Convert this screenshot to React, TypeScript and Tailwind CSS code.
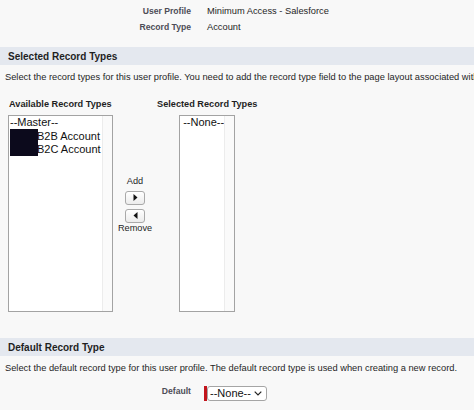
import React from "react";

const font = "font-['Liberation_Sans',Arial,sans-serif]";

function SectionHeader({ title }: { title: string }) {
    return (
        <div className="flex h-[18px] items-center bg-[#e4e8ef] pl-[8px]">
            <h2 className="text-[10px] font-bold text-[#1f1f1f]">{title}</h2>
        </div>
    );
}

function MoveButton({ dir }: { dir: "right" | "left" }) {
    return (
        <button
            type="button"
            className="flex h-[14px] w-[20px] items-center justify-center rounded-[3px] border border-[#a9a9a9] bg-gradient-to-b from-white to-[#ececec]"
            aria-label={dir === "right" ? "Add" : "Remove"}
        >
            <svg width="5" height="7" viewBox="0 0 5 7">
                {dir === "right" ? (
                    <polygon points="0.5,0 4.5,3.5 0.5,7" fill="#111" />
                ) : (
                    <polygon points="4.5,0 0.5,3.5 4.5,7" fill="#111" />
                )}
            </svg>
        </button>
    );
}

function ListBox({ children, width, padLeft }: { children: React.ReactNode; width: string; padLeft: string }) {
    return (
        <div className={`relative flex h-[197px] ${width} border border-[#a3a3a3] bg-white`}>
            <div className={`flex-1 ${padLeft} text-[11px] leading-[13.5px] text-[#111]`}>{children}</div>
            <div className="w-[10px] border-l border-[#ececec] bg-[#fafafa]" />
        </div>
    );
}

export default function App() {
    return (
        <div className={`${font} min-h-[410px] w-[474px] overflow-hidden bg-[#f8f8f8] text-[#1f1f1f]`}>
            {/* profile / record type summary */}
            <div className="grid grid-cols-[191px_1fr] gap-x-[16px] pt-[3px] text-[9.3px] leading-[16px]">
                <span className="text-right text-[8.6px] font-bold text-[#4d4d57]">User Profile</span>
                <span>Minimum Access - Salesforce</span>
                <span className="text-right text-[8.6px] font-bold text-[#4d4d57]">Record Type</span>
                <span>Account</span>
            </div>

            <div className="mt-[12px]">
                <SectionHeader title="Selected Record Types" />
                <p className="mt-[6px] whitespace-nowrap pl-[5px] text-[9.3px] leading-[12px]">
                    Select the record types for this user profile. You need to add the record type field to the page layout associated with the record type.
                </p>

                <div className="mt-[15px] flex items-center pl-[8px]">
                    <div className="flex flex-col">
                        <span className="pl-[1px] text-[9.2px] font-bold leading-[12px]">Available Record Types</span>
                        <div className="mt-[5px]">
                            <ListBox width="w-[105px]" padLeft="pl-[1px]">
                                <div>--Master--</div>
                                <div className="pl-[27px]">B2B Account</div>
                                <div className="pl-[27px]">B2C Account</div>
                                <div className="absolute left-[1px] top-[13px] h-[27px] w-[28px] bg-[#0c0a1c]" />
                            </ListBox>
                        </div>
                    </div>

                    <div className="flex w-[44px] flex-col items-center text-[9.2px] leading-[11px] text-[#1f1f1f]">
                        <span>Add</span>
                        <div className="mt-[3.5px] flex flex-col gap-[4px]">
                            <MoveButton dir="right" />
                            <MoveButton dir="left" />
                        </div>
                        <span>Remove</span>
                    </div>

                    <div className="flex flex-col items-center">
                        <span className="text-[9.2px] font-bold leading-[12px]">Selected Record Types</span>
                        <div className="mt-[5px]">
                            <ListBox width="w-[56px]" padLeft="pl-[3px]">
                                <div>--None--</div>
                            </ListBox>
                        </div>
                    </div>
                </div>
            </div>

            <div className="mt-[26px]">
                <SectionHeader title="Default Record Type" />
                <p className="mt-[6px] whitespace-nowrap pl-[5px] text-[9.3px] leading-[12px]">
                    Select the default record type for this user profile. The default record type is used when creating a new record.
                </p>
                <div className="mt-[12px] grid grid-cols-[191px_1fr] gap-x-[13px]">
                    <span className="text-right text-[8.6px] font-bold leading-[10px] text-[#4d4d57]">Default</span>
                    <div className="flex items-stretch">
                        <div className="w-[3px] bg-[#c2151c]" />
                        <div className="flex h-[15px] w-[60px] items-center justify-between rounded-[3px] border border-[#a5a5a5] bg-white pl-[2px] pr-[4px] text-[11px] text-[#111]">
                            <span>--None--</span>
                            <svg width="8" height="5" viewBox="0 0 8 5">
                                <polyline points="0.7,0.7 4,4 7.3,0.7" fill="none" stroke="#222" strokeWidth="1.2" />
                            </svg>
                        </div>
                    </div>
                </div>
            </div>
        </div>
    );
}
